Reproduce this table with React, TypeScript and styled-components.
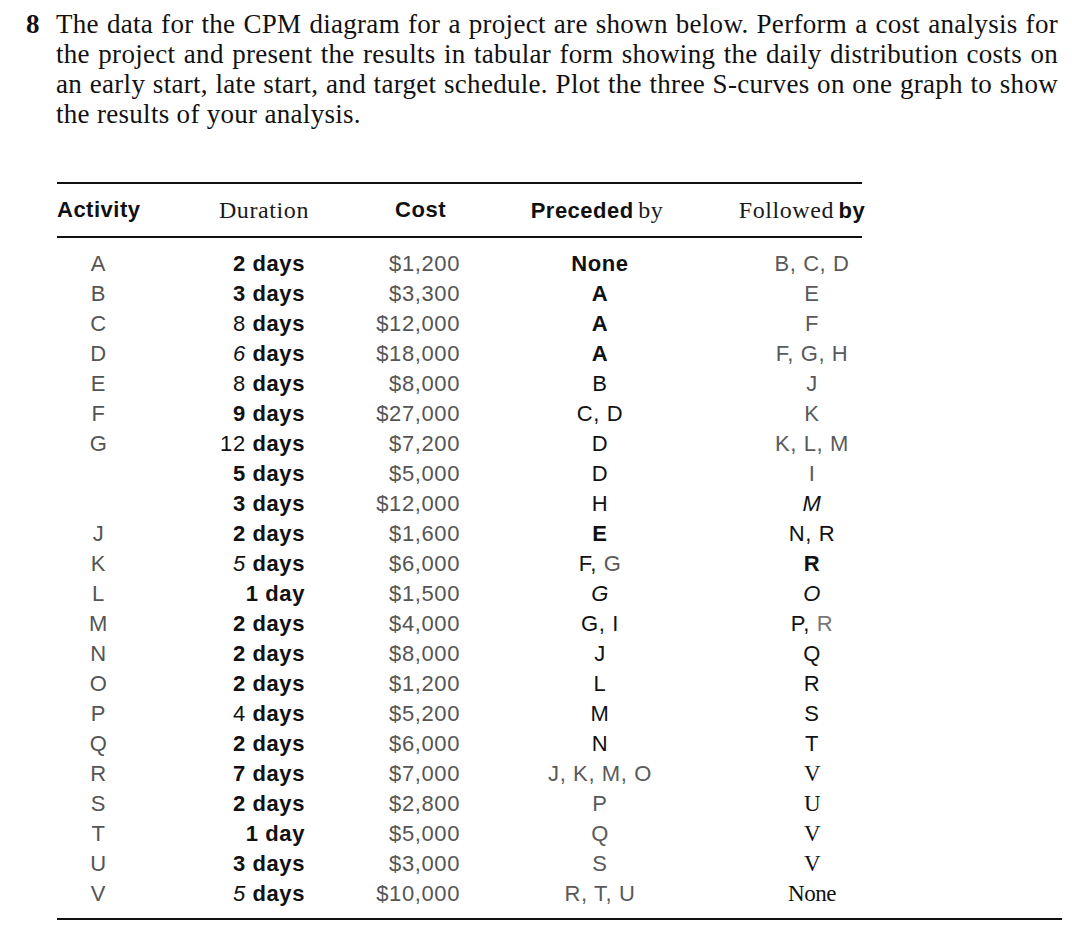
import styled, { createGlobalStyle } from 'styled-components'

const GlobalStyle = createGlobalStyle`
    html, body {
        margin: 0;
        padding: 0;
        background: #ffffff;
    }
    body {
        width: 1072px;
        height: 935px;
        overflow: hidden;
    }
`

type Look = 'bold' | 'reg' | 'italic' | 'gray' | 'serif' | 'light'

const Page = styled.main`
    padding: 9px 0 0 26px;
    color: #111;
`

const Problem = styled.section`
    display: grid;
    grid-template-columns: 30px 1002px;
    font-family: 'Liberation Serif', 'Times New Roman', serif;
    font-size: 27px;
    letter-spacing: 0.3px;
    line-height: 30px;
`

const ProblemNumber = styled.span`
    font-weight: bold;
`

const ProblemText = styled.div`
    margin: 0;
`

const ProblemLine = styled.span<{ $last?: boolean }>`
    display: block;
    white-space: nowrap;
    text-align: ${(p) => (p.$last ? 'left' : 'justify')};
    text-align-last: ${(p) => (p.$last ? 'left' : 'justify')};
`

const Table = styled.div`
    margin: 53px 0 0 31px;
    width: 805px;
    font-family: 'Liberation Sans', Arial, sans-serif;
`

const HeaderRow = styled.div`
    display: grid;
    grid-template-columns: 83px 190px 170px 200px 162px;
    align-items: center;
    height: 52px;
    border-top: 2px solid #111;
    border-bottom: 2px solid #111;
    white-space: nowrap;
`

const Body = styled.div`
    padding: 11px 0 9px;
`

const Row = styled.div`
    display: grid;
    grid-template-columns: 83px 190px 170px 200px 162px;
    height: 30px;
    line-height: 30px;
    font-size: 22px;
    letter-spacing: 0.6px;
    white-space: nowrap;
`

const Cell = styled.div<{ $align: 'left' | 'center' | 'right'; $right?: number; $spill?: number }>`
    text-align: ${(p) => p.$align};
    padding-right: ${(p) => p.$right ?? 0}px;
    margin-right: ${(p) => -(p.$spill ?? 0)}px;
`

const HeadSans = styled.span`
    font-family: 'Liberation Sans', Arial, sans-serif;
    font-weight: bold;
    font-size: 22px;
    letter-spacing: 0.5px;
    color: #111;
`

const HeadSerif = styled.span`
    font-family: 'Liberation Serif', 'Times New Roman', serif;
    font-size: 24px;
    letter-spacing: 0.6px;
    color: #1a1a1a;
`

const Letter = styled.span`
    color: #555;
`

const Days = styled.span`
    font-weight: bold;
    color: #111;
`

const Num = styled.span<{ $look: Look }>`
    font-weight: ${(p) => (p.$look === 'bold' ? 'bold' : 'normal')};
    font-style: ${(p) => (p.$look === 'italic' ? 'italic' : 'normal')};
`

const Cost = styled.span`
    color: #555;
`

const Ref = styled.span<{ $look: Look }>`
    font-family: ${(p) =>
        p.$look === 'serif'
            ? "'Liberation Serif', 'Times New Roman', serif"
            : "'Liberation Sans', Arial, sans-serif"};
    font-size: ${(p) => (p.$look === 'serif' ? '23px' : '22px')};
    letter-spacing: ${(p) => (p.$look === 'serif' ? '-0.5px' : '0.6px')};
    font-weight: ${(p) => (p.$look === 'bold' ? 'bold' : 'normal')};
    font-style: ${(p) => (p.$look === 'italic' ? 'italic' : 'normal')};
    color: ${(p) =>
        p.$look === 'gray' ? '#5a5a5a' : p.$look === 'light' ? '#777' : '#111'};
`

const BottomRule = styled.div`
    margin-left: 31px;
    width: 1005px;
    height: 2px;
    background: #111;
`

type Item = {
    act: string
    num: string
    numLook: Look
    unit: string
    cost: string
    pre: [string, Look][]
    fol: [string, Look][]
}

const problemLines = [
    'The data for the CPM diagram for a project are shown below. Perform a cost analysis for',
    'the project and present the results in tabular form showing the daily distribution costs on',
    'an early start, late start, and target schedule. Plot the three S-curves on one graph to show',
    'the results of your analysis.',
]

const rows: Item[] = [
    { act: 'A', num: '2', numLook: 'bold', unit: 'days', cost: '$1,200', pre: [['None', 'bold']], fol: [['B, C, D', 'gray']] },
    { act: 'B', num: '3', numLook: 'bold', unit: 'days', cost: '$3,300', pre: [['A', 'bold']], fol: [['E', 'gray']] },
    { act: 'C', num: '8', numLook: 'reg', unit: 'days', cost: '$12,000', pre: [['A', 'bold']], fol: [['F', 'gray']] },
    { act: 'D', num: '6', numLook: 'italic', unit: 'days', cost: '$18,000', pre: [['A', 'bold']], fol: [['F, G, H', 'gray']] },
    { act: 'E', num: '8', numLook: 'reg', unit: 'days', cost: '$8,000', pre: [['B', 'reg']], fol: [['J', 'gray']] },
    { act: 'F', num: '9', numLook: 'bold', unit: 'days', cost: '$27,000', pre: [['C, D', 'reg']], fol: [['K', 'gray']] },
    { act: 'G', num: '12', numLook: 'reg', unit: 'days', cost: '$7,200', pre: [['D', 'reg']], fol: [['K, L, M', 'gray']] },
    { act: '', num: '5', numLook: 'bold', unit: 'days', cost: '$5,000', pre: [['D', 'reg']], fol: [['I', 'gray']] },
    { act: '', num: '3', numLook: 'bold', unit: 'days', cost: '$12,000', pre: [['H', 'reg']], fol: [['M', 'italic']] },
    { act: 'J', num: '2', numLook: 'bold', unit: 'days', cost: '$1,600', pre: [['E', 'bold']], fol: [['N, R', 'reg']] },
    { act: 'K', num: '5', numLook: 'italic', unit: 'days', cost: '$6,000', pre: [['F, ', 'reg'], ['G', 'gray']], fol: [['R', 'bold']] },
    { act: 'L', num: '1', numLook: 'bold', unit: 'day', cost: '$1,500', pre: [['G', 'italic']], fol: [['O', 'italic']] },
    { act: 'M', num: '2', numLook: 'bold', unit: 'days', cost: '$4,000', pre: [['G, I', 'reg']], fol: [['P, ', 'reg'], ['R', 'light']] },
    { act: 'N', num: '2', numLook: 'bold', unit: 'days', cost: '$8,000', pre: [['J', 'reg']], fol: [['Q', 'reg']] },
    { act: 'O', num: '2', numLook: 'bold', unit: 'days', cost: '$1,200', pre: [['L', 'reg']], fol: [['R', 'reg']] },
    { act: 'P', num: '4', numLook: 'reg', unit: 'days', cost: '$5,200', pre: [['M', 'reg']], fol: [['S', 'reg']] },
    { act: 'Q', num: '2', numLook: 'bold', unit: 'days', cost: '$6,000', pre: [['N', 'reg']], fol: [['T', 'reg']] },
    { act: 'R', num: '7', numLook: 'bold', unit: 'days', cost: '$7,000', pre: [['J, K, M, O', 'gray']], fol: [['V', 'serif']] },
    { act: 'S', num: '2', numLook: 'bold', unit: 'days', cost: '$2,800', pre: [['P', 'gray']], fol: [['U', 'serif']] },
    { act: 'T', num: '1', numLook: 'bold', unit: 'day', cost: '$5,000', pre: [['Q', 'gray']], fol: [['V', 'serif']] },
    { act: 'U', num: '3', numLook: 'bold', unit: 'days', cost: '$3,000', pre: [['S', 'gray']], fol: [['V', 'serif']] },
    { act: 'V', num: '5', numLook: 'italic', unit: 'days', cost: '$10,000', pre: [['R, T, U', 'gray']], fol: [['None', 'serif']] },
]

export default function App(): JSX.Element {
    return (
        <Page>
            <GlobalStyle />
            <Problem>
                <ProblemNumber>8</ProblemNumber>
                <ProblemText>
                    {problemLines.map((line, i) => (
                        <ProblemLine key={i} $last={i === problemLines.length - 1}>
                            {line}
                        </ProblemLine>
                    ))}
                </ProblemText>
            </Problem>
            <Table>
                <HeaderRow>
                    <Cell $align="left">
                        <HeadSans>Activity</HeadSans>
                    </Cell>
                    <Cell $align="right" $right={21}>
                        <HeadSerif>Duration</HeadSerif>
                    </Cell>
                    <Cell $align="right" $right={54}>
                        <HeadSans>Cost</HeadSans>
                    </Cell>
                    <Cell $align="center" $right={6}>
                        <HeadSans>Preceded</HeadSans> <HeadSerif>by</HeadSerif>
                    </Cell>
                    <Cell $align="center" $spill={42}>
                        <HeadSerif>Followed</HeadSerif> <HeadSans>by</HeadSans>
                    </Cell>
                </HeaderRow>
                <Body>
                    {rows.map((r, i) => (
                        <Row key={i}>
                            <Cell $align="center">
                                <Letter>{r.act}</Letter>
                            </Cell>
                            <Cell $align="right" $right={25}>
                                <Days>
                                    <Num $look={r.numLook}>{r.num}</Num> {r.unit}
                                </Days>
                            </Cell>
                            <Cell $align="right" $right={40}>
                                <Cost>{r.cost}</Cost>
                            </Cell>
                            <Cell $align="center">
                                {r.pre.map(([t, look], j) => (
                                    <Ref key={j} $look={look}>
                                        {t}
                                    </Ref>
                                ))}
                            </Cell>
                            <Cell $align="center" $spill={62}>
                                {r.fol.map(([t, look], j) => (
                                    <Ref key={j} $look={look}>
                                        {t}
                                    </Ref>
                                ))}
                            </Cell>
                        </Row>
                    ))}
                </Body>
            </Table>
            <BottomRule />
        </Page>
    )
}
